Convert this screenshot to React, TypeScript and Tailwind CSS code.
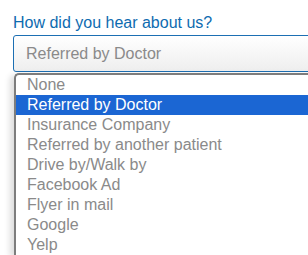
const options = [
  'None',
  'Referred by Doctor',
  'Insurance Company',
  'Referred by another patient',
  'Drive by/Walk by',
  'Facebook Ad',
  'Flyer in mail',
  'Google',
  'Yelp',
];

export default function App() {
  const selected = 'Referred by Doctor';

  return (
    <div className="w-[308px] h-[255px] overflow-hidden bg-white pt-[13px] pl-[13px] font-['Liberation_Sans',Arial,sans-serif]">
      <label className="block text-[16px] leading-[20px] text-[#0e6bb0]">
        How did you hear about us?
      </label>
      <div className="mt-[2px] w-[310px] h-[37px] flex items-center pl-[12px] border border-[#1c6fb3] rounded-[3px] bg-gradient-to-b from-white to-[#eeeeee] text-[16px] text-[#8a8a8a]">
        {selected}
      </div>
      <div className="mt-[1px] ml-[1px] w-[310px] border-l-2 border-t-2 border-[#7d7d7d] rounded-tl-[5px] bg-white shadow-[-4px_2px_6px_rgba(0,0,0,0.14)]">
        {options.map((opt) => (
          <div
            key={opt}
            className={`h-[20px] leading-[20px] pl-[11px] text-[16px] whitespace-nowrap ${
              opt === selected ? 'bg-[#1b66d3] text-white' : 'text-[#8a8a8a]'
            }`}
          >
            {opt}
          </div>
        ))}
      </div>
    </div>
  );
}
